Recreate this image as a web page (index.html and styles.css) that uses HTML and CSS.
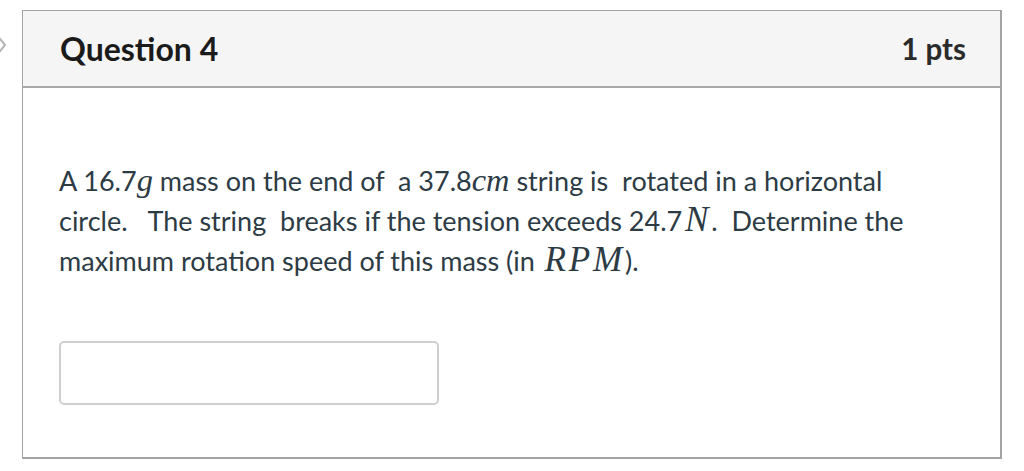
FILE: index.html
```html
<!DOCTYPE html>
<html>
<head>
<meta charset="utf-8">
<link rel="stylesheet" href="styles.css">
</head>
<body>
<div class="page">
  <svg class="nav-arrow" width="10" height="26" viewBox="0 0 10 26"><path d="M-4 2 L5 13 L-4 24" fill="none" stroke="#b5b5b5" stroke-width="2"/></svg>
  <div class="card">
    <div class="card-header">
      <h2 class="title">Question 4</h2>
      <span class="pts">1 pts</span>
    </div>
    <div class="card-body">
      <p class="question">A 16.7<span class="m">g</span> mass on the end of&nbsp; a 37.8<span class="m">cm</span> string is &nbsp;rotated in a horizontal<br>circle. &nbsp; The string&nbsp; breaks if the tension exceeds 24.7<span class="m wide">N</span>. &nbsp;Determine the<br>maximum rotation speed of this mass (in <span class="m wide">RPM</span>).</p>
      <div class="answer"></div>
    </div>
  </div>
</div>
</body>
</html>
```
FILE: styles.css
```css
html, body {
  margin: 0;
  padding: 0;
  background: #ffffff;
}
body {
  font-family: Lato, "Noto Sans", sans-serif;
  color: #2d3b45;
}
.page {
  position: relative;
  padding: 10px 22px 0 22px;
  width: 980px;
}
.nav-arrow {
  position: absolute;
  left: 0;
  top: 32px;
}
.card {
  border-style: solid;
  border-width: 1px 2px 2px 1px;
  border-color: #a3a3a3;
  width: 980px;
  height: 449px;
  box-sizing: border-box;
}
.card-header {
  display: flex;
  justify-content: space-between;
  align-items: center;
  height: 77px;
  background: #f5f5f5;
  border-bottom: 2px solid #a8a8a8;
  padding: 0 34px 0 37px;
  box-sizing: border-box;
}
.title {
  margin: 0;
  font-size: 32px;
  font-weight: 700;
  color: #1b1b1b;
}
.pts {
  font-size: 29.5px;
  font-weight: 700;
  color: #2b2b2b;
}
.card-body {
  padding: 73px 36px 0 36px;
}
.question {
  margin: 0;
  font-size: 27px;
  line-height: 40px;
  color: #2d3b45;
}
.m {
  font-family: "Liberation Serif", "DejaVu Serif", serif;
  font-style: italic;
  font-size: 1.2em;
  line-height: 1;
}
.m.wide {
  font-size: 1.3em;
  letter-spacing: 0.08em;
  padding-left: 0.08em;
}
.answer {
  margin-top: 60px;
  width: 380px;
  height: 64px;
  box-sizing: border-box;
  border: 2px solid #cfcfcf;
  border-radius: 5px;
}
```
